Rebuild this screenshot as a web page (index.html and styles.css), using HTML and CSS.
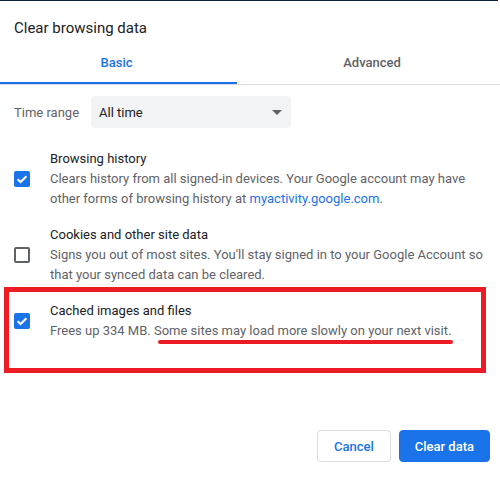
FILE: index.html
```html
<!DOCTYPE html>
<html>
<head>
<meta charset="utf-8">
<link rel="stylesheet" href="styles.css">
</head>
<body>
<div class="topline"></div>
<div class="dialog">
  <h1 class="title">Clear browsing data</h1>
  <div class="tabs">
    <div class="tab active"><span>Basic</span></div>
    <div class="tab"><span>Advanced</span></div>
  </div>
  <div class="content">
    <div class="range">
      <span class="range-label">Time range</span>
      <div class="select">
        <span>All time</span>
        <svg class="arrow" width="10" height="5" viewBox="0 0 10 5"><path d="M0 0 L10 0 L5 5 Z" fill="#5f6368"/></svg>
      </div>
    </div>
    <div class="item">
      <span class="box checked"><svg width="16" height="16" viewBox="0 0 16 16"><path d="M3.6 8.2 L6.6 11 L12.4 5.2" fill="none" stroke="#fff" stroke-width="2"/></svg></span>
      <div class="text">
        <div class="label">Browsing history</div>
        <div class="desc">Clears history from all signed-in devices. Your Google account may have other forms of browsing history at <span class="link">myactivity.google.com</span>.</div>
      </div>
    </div>
    <div class="item">
      <span class="box"></span>
      <div class="text">
        <div class="label">Cookies and other site data</div>
        <div class="desc">Signs you out of most sites. You'll stay signed in to your Google Account so that your synced data can be cleared.</div>
      </div>
    </div>
    <div class="item">
      <span class="box checked"><svg width="16" height="16" viewBox="0 0 16 16"><path d="M3.6 8.2 L6.6 11 L12.4 5.2" fill="none" stroke="#fff" stroke-width="2"/></svg></span>
      <div class="text">
        <div class="label">Cached images and files</div>
        <div class="desc">Frees up 334 MB. Some sites may load more slowly on your next visit.</div>
      </div>
    </div>
  </div>
  <div class="footer">
    <button class="btn cancel">Cancel</button>
    <button class="btn primary">Clear data</button>
  </div>
</div>
<div class="highlight"></div>
<div class="underline"></div>
</body>
</html>
```

FILE: styles.css
```css
html, body {
  margin: 0;
  padding: 0;
  background: #fff;
  width: 500px;
  height: 478px;
  overflow: hidden;
  font-family: Roboto, "Liberation Sans", sans-serif;
  font-size: 13px;
  color: #202124;
}
.topline {
  height: 1px;
  width: 498px;
  background: #0f2241;
}
.title {
  margin: 0;
  padding: 17px 0 0 14px;
  font-size: 15px;
  font-weight: 400;
  line-height: 20px;
  color: #202124;
}
.tabs {
  display: grid;
  grid-template-columns: 237px 1fr;
  border-bottom: 1px solid #dadce0;
}
.tab {
  padding-top: 15px;
  height: 29px;
  line-height: 20px;
  text-align: center;
  font-weight: 500;
  color: #5f6368;
  font-size: 13px;
  border-bottom: 2px solid transparent;
}
.tab.active {
  padding-right: 4px;
}
.tab + .tab {
  padding-left: 7px;
}
.tab.active {
  color: #1a73e8;
  border-bottom-color: #1a73e8;
}
.content {
  padding-top: 11px;
}
.range {
  display: flex;
  align-items: center;
  padding-left: 14px;
  margin-bottom: 21px;
}
.range-label {
  width: 77px;
  color: #5f6368;
}
.select {
  width: 200px;
  height: 32px;
  box-sizing: border-box;
  background: #f1f3f4;
  border-radius: 4px;
  display: flex;
  align-items: center;
  justify-content: space-between;
  padding: 0 9px 0 8px;
  color: #202124;
}
.item {
  display: flex;
  align-items: center;
  padding-left: 14px;
  margin-bottom: 16px;
}
.box {
  flex: none;
  width: 16px;
  height: 16px;
  box-sizing: border-box;
  border: 2px solid #5f6368;
  border-radius: 2px;
  margin-right: 20px;
  display: flex;
}
.box.checked {
  border: none;
  background: #1a73e8;
}
.text {
  line-height: 20px;
  padding-right: 12px;
}
.label {
  color: #202124;
}
.desc {
  color: #5f6368;
}
.link {
  color: #1a73e8;
}
.footer {
  display: flex;
  justify-content: flex-end;
  gap: 8px;
  padding-right: 10px;
  margin-top: 89px;
}
.btn {
  height: 32px;
  border-radius: 4px;
  font-family: Roboto, "Liberation Sans", sans-serif;
  font-size: 13px;
  font-weight: 500;
  box-sizing: border-box;
  cursor: pointer;
}
.cancel {
  background: #fff;
  color: #1a73e8;
  border: 1px solid #dadce0;
  padding: 0 16px;
}
.primary {
  background: #1a73e8;
  color: #fff;
  border: 1px solid #1a73e8;
  padding: 0 15px;
}
.highlight {
  position: absolute;
  left: 4px;
  top: 287px;
  width: 482px;
  height: 86px;
  box-sizing: border-box;
  border: 5px solid #ed1c24;
}
.underline {
  position: absolute;
  left: 158px;
  top: 340px;
  width: 295px;
  height: 4px;
  border-radius: 2px;
  background: #ed1c24;
}
```
